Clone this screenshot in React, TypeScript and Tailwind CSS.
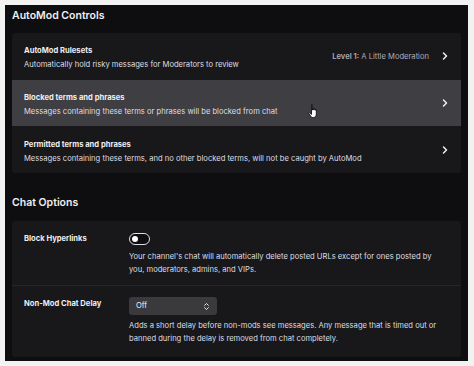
import { ChevronRight, ChevronsUpDown } from "lucide-react";

const font = { fontFamily: "Inter, 'Noto Sans', sans-serif" };

function Chevron() {
  return <ChevronRight className="w-3 h-3 text-[#efeff1]" strokeWidth={3} />;
}

function HandCursor() {
  return (
    <svg
      className="absolute left-[296px] top-[23px]"
      width="12"
      height="16"
      viewBox="0 0 12 16"
    >
      <path
        d="M3.5 1.2c0-.6.9-.6.9 0V7h.4V5.6c0-.6.9-.6.9 0V7h.4V6c0-.6.9-.6.9 0v1.2h.4v-.6c0-.6.9-.6.9 0V11c0 2-1.2 3.6-3 3.6H5c-1.2 0-1.8-.7-2.4-1.6L1 10.4c-.3-.6.4-1.1.9-.6l1.6 1.6V1.2z"
        fill="#fff"
        stroke="#000"
        strokeWidth="0.8"
        strokeLinejoin="round"
      />
    </svg>
  );
}

function NavRow({
  title,
  desc,
  right,
  hover,
}: {
  title: string;
  desc: string;
  right?: React.ReactNode;
  hover?: boolean;
}) {
  return (
    <div
      className={`relative flex items-center h-[46.7px] pl-3 pr-[10px] ${hover ? "bg-[#3e3e43]" : ""}`}
    >
      <div className="flex-1 min-w-0 pt-[4px]">
        <p className="text-[7.6px] font-bold leading-[14px] text-[#efeff1]">{title}</p>
        <p className="text-[7.6px] leading-[14px] text-[#dedee3]">{desc}</p>
      </div>
      {right}
      <Chevron />
      {hover && <HandCursor />}
    </div>
  );
}

export default function App() {
  return (
    <div className="w-[474px] h-[366px] bg-[#f2f2f2] p-[5px] pr-[6px]" style={font}>
      <div className="h-[356px] bg-[#0e0e10] px-[7px] pt-[1px] overflow-hidden">
        <h2 className="text-[10.5px] font-semibold text-[#efeff1] leading-[20px]">AutoMod Controls</h2>

        <div className="mt-[7px] bg-[#18181b] rounded-[3px] overflow-hidden">
          <NavRow
            title="AutoMod Rulesets"
            desc="Automatically hold risky messages for Moderators to review"
            right={
              <span className="text-[7.6px] text-[#adadb8] mr-[10px]">
                <b className="font-semibold">Level 1:</b> A Little Moderation
              </span>
            }
          />
          <NavRow
            hover
            title="Blocked terms and phrases"
            desc="Messages containing these terms or phrases will be blocked from chat"
          />
          <NavRow
            title="Permitted terms and phrases"
            desc="Messages containing these terms, and no other blocked terms, will not be caught by AutoMod"
          />
        </div>

        <h2 className="mt-[20px] text-[10.5px] font-semibold text-[#efeff1] leading-[20px]">Chat Options</h2>

        <div className="mt-[8px] bg-[#18181b] rounded-[3px]">
          <div className="flex pl-3 pr-4 pt-[12px] pb-[9px] border-b border-[#27272a]">
            <p className="w-[105px] -mt-[1px] text-[7.6px] font-bold text-[#efeff1] leading-[13px]">Block Hyperlinks</p>
            <div className="flex-1">
              <div className="w-[21px] h-[12px] rounded-full border-[1.5px] border-[#dedee3] bg-[#0e0e10] flex items-center pl-[2px]">
                <div className="w-[6px] h-[6px] rounded-full bg-white" />
              </div>
              <p className="mt-[5px] text-[7.6px] leading-[13px] text-[#dedee3]">
                Your channel's chat will automatically delete posted URLs except for ones posted by you, moderators, admins, and VIPs.
              </p>
            </div>
          </div>
          <div className="flex pl-3 pr-4 pt-[11px] pb-[12px]">
            <p className="w-[105px] text-[7.6px] font-bold text-[#efeff1] leading-[13px]">Non-Mod Chat Delay</p>
            <div className="flex-1">
              <div className="w-[88px] h-[18px] rounded-[3px] bg-[#3a3a3d] flex items-center justify-between pl-[7px] pr-[6px]">
                <span className="text-[7.6px] text-[#efeff1]">Off</span>
                <ChevronsUpDown className="w-[9px] h-[9px] text-[#efeff1]" strokeWidth={2.5} />
              </div>
              <p className="mt-[4px] text-[7.6px] leading-[13px] text-[#dedee3]">
                Adds a short delay before non-mods see messages. Any message that is timed out or banned during the delay is removed from chat completely.
              </p>
            </div>
          </div>
        </div>
      </div>
    </div>
  );
}
